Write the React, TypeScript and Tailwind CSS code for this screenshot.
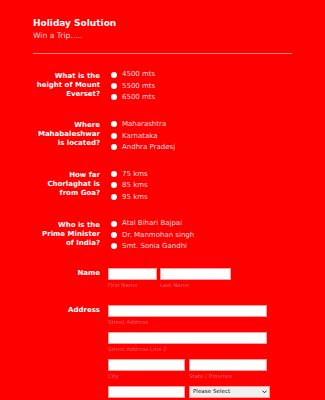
import React from 'react';

const questions = [
  { label: ['What is the', 'height of Mount', 'Everset?'], options: ['4500 mts', '5500 mts', '6500 mts'] },
  { label: ['Where', 'Mahabaleshwar', 'is located?'], options: ['Maharashtra', 'Karnataka', 'Andhra Pradesj'] },
  { label: ['How far', 'Chorlaghat is', 'from Goa?'], options: ['75 kms', '85 kms', '95 kms'] },
  { label: ['Who is the', 'Prime Minister', 'of India?'], options: ['Atal Bihari Bajpai', 'Dr. Manmohan singh', 'Smt. Sonia Gandhi'] },
];

function Field({ width, label }: { width: string; label: string }) {
  return (
    <div className="flex flex-col">
      <input className={`${width} h-[12px] bg-white border border-[#ff9c9c] outline-none`} />
      <span className="text-[5.5px] leading-[10px] text-[#e06262]">{label}</span>
    </div>
  );
}

export default function App() {
  return (
    <div className="w-[325px] h-[400px] overflow-hidden bg-[#ff0000] pl-[33px] pt-[17px] font-['DejaVu_Sans',sans-serif]">
      <div className="w-[259px]">
        <h1 className="text-[9px] leading-[12px] font-bold text-white">Holiday Solution</h1>
        <p className="mt-[2px] text-[7.6px] leading-[10px] text-[#ffd6d6]">Win a Trip.....</p>
        <div className="mt-[12px] h-px bg-[#ff8484]" />
      </div>

      <div className="mt-[15px]">
        {questions.map((q, i) => (
          <div key={i} className="flex mb-[15.5px]">
            <div className="w-[67px] pt-[2.5px] text-right text-[7px] leading-[9px] font-bold text-white">
              {q.label.map((l, j) => (
                <div key={j}>{l}</div>
              ))}
            </div>
            <div className="ml-[8px] flex flex-col">
              {q.options.map((o, j) => (
                <label key={j} className="flex items-center h-[11.4px] text-[7px] text-[#ffdede]">
                  <span className="ml-[3px] w-[6px] h-[6px] rounded-full bg-white" />
                  <span className="ml-[5px]">{o}</span>
                </label>
              ))}
            </div>
          </div>
        ))}
      </div>

      <div className="flex mt-[2px]">
        <div className="w-[67px] h-[12px] flex items-center justify-end text-[7px] font-bold text-white">Name</div>
        <div className="ml-[8px] flex gap-[3px]">
          <Field width="w-[49px]" label="First Name" />
          <Field width="w-[71px]" label="Last Name" />
        </div>
      </div>

      <div className="flex mt-[15px]">
        <div className="w-[67px] h-[12px] flex items-center justify-end text-[7px] font-bold text-white">Address</div>
        <div className="ml-[8px] flex flex-col gap-[5px]">
          <Field width="w-[159px]" label="Street Address" />
          <Field width="w-[159px]" label="Street Address Line 2" />
          <div className="flex gap-[4px]">
            <Field width="w-[77px]" label="City" />
            <Field width="w-[78px]" label="State / Province" />
          </div>
          <div className="flex gap-[4px]">
            <Field width="w-[77px]" label="Postal / Zip Code" />
            <div className="flex flex-col">
              <div className="relative w-[81px] h-[12px] bg-[#efefef] border border-[#ff9c9c] flex items-center">
                <span className="pl-[3px] text-[5.6px] text-[#222]">Please Select</span>
                <svg className="absolute right-[2px] top-[3.5px]" width="5" height="4" viewBox="0 0 10 8">
                  <path d="M1 1.5 L5 5.5 L9 1.5" fill="none" stroke="#222" strokeWidth="2" />
                </svg>
              </div>
              <span className="text-[5.5px] leading-[10px] text-[#e06262]">Country</span>
            </div>
          </div>
        </div>
      </div>
    </div>
  );
}
